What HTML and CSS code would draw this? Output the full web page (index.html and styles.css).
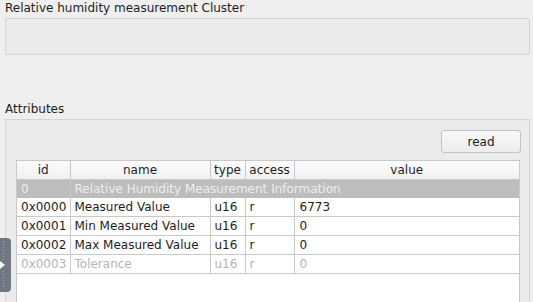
FILE: index.html
```html
<!DOCTYPE html>
<html>
<head>
<meta charset="utf-8">
<link rel="stylesheet" href="styles.css">
</head>
<body>
<div class="page">
  <div class="title">Relative humidity measurement Cluster</div>
  <div class="infobox"></div>
  <div class="section-label">Attributes</div>
  <div class="group">
    <div class="toolbar"><button class="btn">read</button></div>
    <div class="tablewrap">
      <table class="attrs">
        <colgroup>
          <col class="c-id"><col class="c-name"><col class="c-type"><col class="c-access"><col class="c-value">
        </colgroup>
        <thead>
          <tr><th>id</th><th>name</th><th>type</th><th>access</th><th>value</th></tr>
        </thead>
        <tbody>
          <tr class="grouprow"><td>0</td><td colspan="4">Relative Humidity Measurement Information</td></tr>
          <tr><td>0x0000</td><td>Measured Value</td><td>u16</td><td>r</td><td>6773</td></tr>
          <tr><td>0x0001</td><td>Min Measured Value</td><td>u16</td><td>r</td><td>0</td></tr>
          <tr><td>0x0002</td><td>Max Measured Value</td><td>u16</td><td>r</td><td>0</td></tr>
          <tr class="disabled"><td>0x0003</td><td>Tolerance</td><td>u16</td><td>r</td><td>0</td></tr>
        </tbody>
      </table>
    </div>
  </div>
</div>
<div class="handle">
  <svg width="11" height="54" viewBox="0 0 11 54">
    <g fill="#aab0b9">
      <rect x="3" y="3" width="1" height="1"/><rect x="3" y="6" width="1" height="1"/><rect x="3" y="9" width="1" height="1"/><rect x="3" y="12" width="1" height="1"/><rect x="3" y="15" width="1" height="1"/><rect x="3" y="18" width="1" height="1"/><rect x="3" y="21" width="1" height="1"/>
      <rect x="3" y="33" width="1" height="1"/><rect x="3" y="36" width="1" height="1"/><rect x="3" y="39" width="1" height="1"/><rect x="3" y="42" width="1" height="1"/><rect x="3" y="45" width="1" height="1"/><rect x="3" y="48" width="1" height="1"/>
    </g>
    <path d="M0 23 L5 27 L0 31 Z" fill="#ffffff"/>
  </svg>
</div>
</body>
</html>
```

FILE: styles.css
```css
html, body {
  margin: 0;
  padding: 0;
  height: 100%;
  overflow: hidden;
}
body {
  background: #efefef;
  font-family: "DejaVu Sans", "Liberation Sans", sans-serif;
  font-size: 12px;
  color: #1e1e1e;
}
.page {
  padding: 1px 3px 0 5px;
  display: flex;
  flex-direction: column;
  height: 301px;
}
.title {
  line-height: 15px;
  height: 16px;
}
.infobox {
  margin-top: 1px;
  height: 35px;
  border: 1px solid #d5d5d5;
  background: #ebebeb;
  border-radius: 2px;
}
.section-label {
  margin-top: 47px;
  line-height: 15px;
  height: 16px;
}
.group {
  margin-top: 1px;
  flex: 1;
  border: 1px solid #d5d5d5;
  border-bottom: none;
  background: #ebebeb;
  padding: 10px 8px 0 10px;
  display: flex;
  flex-direction: column;
}
.toolbar {
  display: flex;
  justify-content: flex-end;
  height: 23px;
}
.btn {
  width: 80px;
  height: 23px;
  border: 1px solid #c2c2c2;
  border-radius: 3px;
  background: linear-gradient(#f8f8f8, #ededed);
  font-family: "DejaVu Sans", "Liberation Sans", sans-serif;
  font-size: 12px;
  color: #1e1e1e;
  padding: 0;
}
.tablewrap {
  margin-top: 7px;
  margin-right: 1px;
  flex: 1;
  background: #ffffff;
  border: 1px solid #c9c9c9;
  border-bottom: none;
}
.attrs {
  width: 100%;
  border-collapse: collapse;
  table-layout: fixed;
}
.c-id { width: 53px; }
.c-name { width: 140px; }
.c-type { width: 35px; }
.c-access { width: 49px; }
.attrs th {
  height: 18px;
  font-weight: normal;
  text-align: center;
  background: linear-gradient(#fbfbfb, #f1f1f1);
  border-right: 1px solid #c9c9c9;
  border-bottom: 1px solid #c9c9c9;
  padding: 0;
}
.attrs th:last-child { border-right: none; }
.attrs td {
  height: 18px;
  padding: 0 0 0 4px;
  border-right: 1px solid #c9c9c9;
  border-bottom: 1px solid #c9c9c9;
  white-space: nowrap;
  overflow: hidden;
}
.attrs td:last-child { border-right: none; padding-left: 5px; }
.attrs .grouprow td {
  background: #bdbdbd;
  color: #eeeeee;
  border-right: none;
  border-bottom: none;
}
.attrs .grouprow td:first-child { border-right: 1px solid #c6c6c6; }
.attrs .grouprow td:last-child { padding-left: 4px; }
.attrs .disabled td { color: #b4b4b4; }
.handle {
  position: absolute;
  left: 0;
  top: 238px;
  width: 11px;
  height: 54px;
  background: #6f7783;
  border-radius: 0 4px 4px 0;
}
.handle svg { display: block; }
```
